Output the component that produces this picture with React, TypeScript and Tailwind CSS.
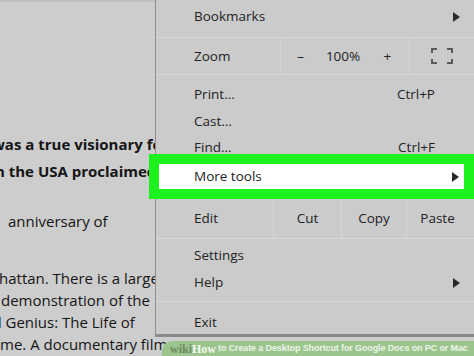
import React from "react";

const Arrow = ({ right = "right-[14px]" }: { right?: string }) => (
	<svg width="7" height="10" viewBox="0 0 7 10" className={`absolute ${right}`}>
		<path d="M0 0 L7 5 L0 10 Z" fill="#2a2a2a" />
	</svg>
);

const FullscreenIcon = () => (
	<svg width="22" height="16" viewBox="0 0 22 16" fill="none" stroke="#5a5a5a" strokeWidth="2">
		<path d="M1 5 V1 H6" />
		<path d="M16 1 H21 V5" />
		<path d="M1 11 V15 H6" />
		<path d="M16 15 H21 V11" />
	</svg>
);

const MenuRow: React.FC<{ label: string; shortcut?: string; arrow?: boolean; h: string }> = ({
	label,
	shortcut,
	arrow,
	h,
}) => (
	<div className={`relative flex items-center pl-[38px] ${h}`}>
		<span>{label}</span>
		{shortcut && <span className="absolute right-[39px]">{shortcut}</span>}
		{arrow && <Arrow />}
	</div>
);

const Separator = () => <div className="h-px bg-[#d8d8d8]" />;

export default function App() {
	return (
		<div className="relative w-[474px] h-[356px] overflow-hidden bg-[#cdcdcd]">
			<div className="h-[2px] bg-[#bdbdbd]" />
			{/* Document text behind the menu */}
			<div
				className="pt-[129px] text-[15px] text-[#151515] whitespace-nowrap"
				style={{ fontFamily: '"Open Sans", "Noto Sans", sans-serif' }}
			>
				<div className="font-bold leading-[27px] -ml-[8px]">was a true visionary for</div>
				<div className="font-bold leading-[27px] -ml-[5px]">n the USA proclaimed</div>
				<div className="leading-[22px] mt-[25px] ml-[8px]">anniversary of</div>
				<div className="leading-[22px] mt-[35px] -ml-[1px]">hattan. There is a large</div>
				<div className="leading-[22px] ml-[1px]">demonstration of the</div>
				<div className="leading-[22px] -ml-[3px]">
					<span className="font-bold">l</span> Genius: The Life of
				</div>
				<div className="leading-[22px]">me. A documentary film</div>
			</div>

			{/* Chrome menu */}
			<div
				className="absolute left-[155px] top-0 right-0 h-[337px] bg-[#cbcbcb] border-l border-b-[3px] border-l-[#8f8f8f] border-b-[#8a8a8a] text-[13.5px] text-[#222]"
				style={{ fontFamily: '"Open Sans", "Noto Sans", sans-serif' }}
			>
				<MenuRow label="Bookmarks" arrow h="h-[33px]" />
				<div className="h-[4px]" />
				<Separator />
				<div className="flex h-[36px] items-center">
					<span className="pl-[38px] w-[124px]">Zoom</span>
					<div className="flex h-full w-[130px] items-center border-x border-[#d6d6d6]">
						<span className="w-[40px] text-center">–</span>
						<span className="w-[46px] text-center">100%</span>
						<span className="w-[44px] text-center">+</span>
					</div>
					<div className="flex flex-1 justify-center">
						<FullscreenIcon />
					</div>
				</div>
				<Separator />
				<div className="h-[6px]" />
				<MenuRow label="Print..." shortcut="Ctrl+P" h="h-[27px]" />
				<MenuRow label="Cast..." h="h-[26px]" />
				<MenuRow label="Find..." shortcut="Ctrl+F" h="h-[27px]" />
				<div className="relative flex h-[25px] items-center ml-[3px] mr-[10px] mt-[3px] bg-white outline-[10px] outline-solid outline-[#1ef21e] pl-[35px]">
					<span>More tools</span>
					<Arrow right="right-[5px]" />
				</div>
				<div className="flex h-[40px] items-center mt-[9px]">
					<span className="pl-[38px] w-[117px]">Edit</span>
					<div className="flex h-full border-l border-[#d6d6d6]">
						<span className="flex w-[68px] items-center justify-center border-r border-[#d6d6d6]">Cut</span>
						<span className="flex w-[65px] items-center justify-center border-r border-[#d6d6d6]">Copy</span>
						<span className="flex w-[61px] items-center justify-center">Paste</span>
					</div>
				</div>
				<Separator />
				<div className="h-[3px]" />
				<MenuRow label="Settings" h="h-[27px]" />
				<MenuRow label="Help" arrow h="h-[27px]" />
				<div className="h-[5px]" />
				<Separator />
				<div className="h-[4px]" />
				<MenuRow label="Exit" h="h-[33px]" />
			</div>

			{/* wikiHow banner */}
			<div className="absolute left-[162px] right-0 bottom-0 flex h-[15px] items-center rounded-tl-[10px] bg-[#9bc58d] pl-[8px] font-bold whitespace-nowrap">
				<span className="text-[12px] text-[#6d8a63]" style={{ fontFamily: '"Liberation Serif", serif' }}>
					wiki
				</span>
				<span className="text-[12px] text-[#f4f8f0]" style={{ fontFamily: '"Liberation Serif", serif' }}>
					How
				</span>
				<span
					className="ml-[2px] text-[9px] tracking-[-0.12px] text-[#eef4ea]"
					style={{ fontFamily: '"Liberation Sans", Arial, sans-serif' }}
				>
					to Create a Desktop Shortcut for Google Docs on PC or Mac
				</span>
			</div>
		</div>
	);
}
